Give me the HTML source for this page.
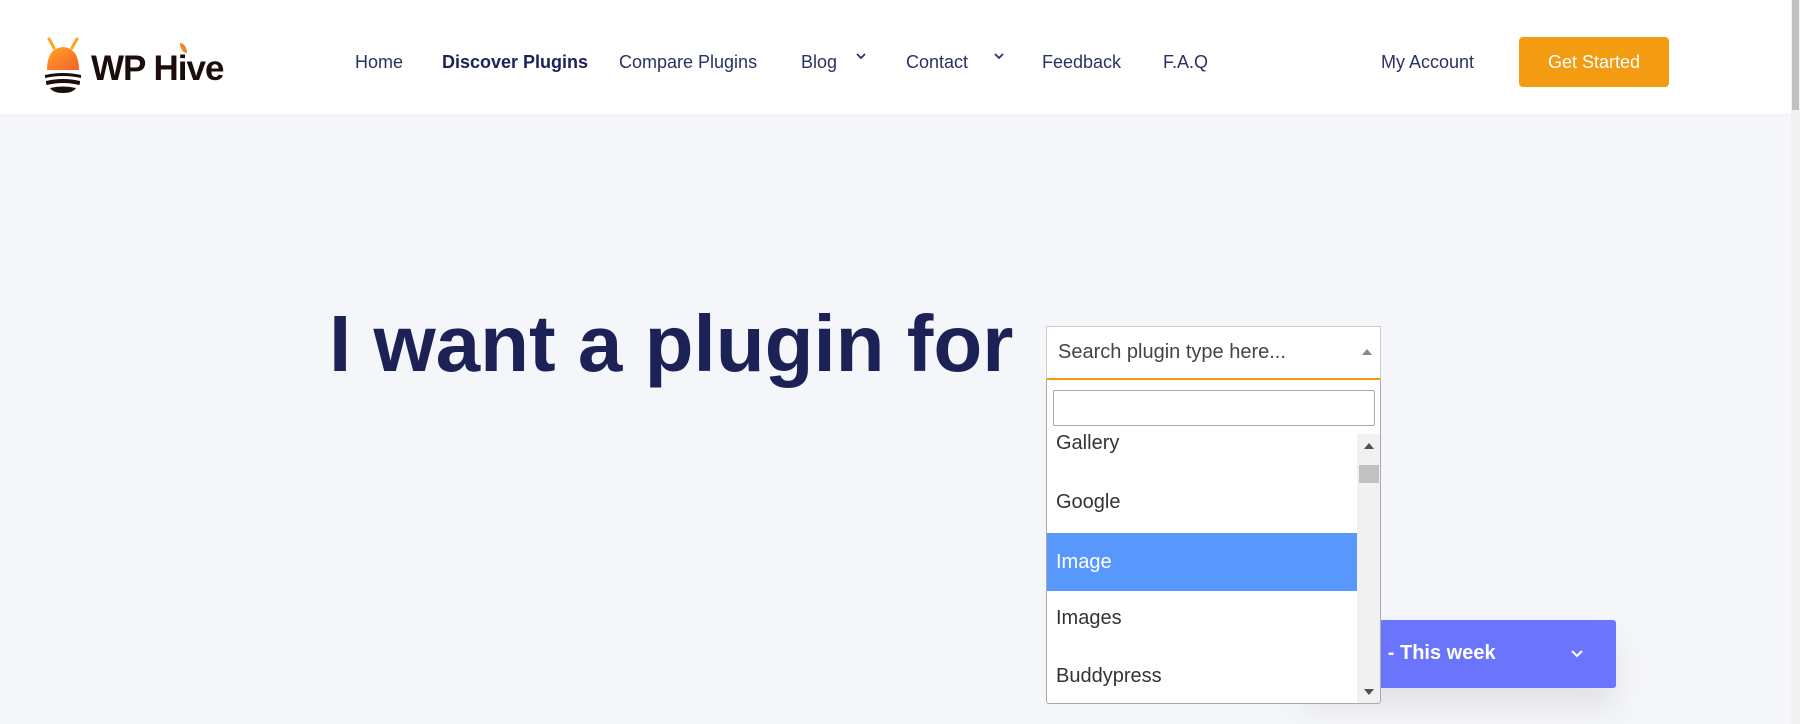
<!DOCTYPE html>
<html><head><style>
*{margin:0;padding:0;box-sizing:border-box}
body{width:1800px;height:724px;background:#f5f6fa;font-family:"Liberation Sans",sans-serif;position:relative;overflow:hidden}
header{position:absolute;left:0;top:0;width:1791px;height:115px;background:#fff;border-bottom:1px solid #eceef3}
.nav{position:absolute;top:52px;font-size:18px;color:#2b3163;white-space:nowrap}
.chev{position:absolute;top:51px;width:10px;height:10px}
.btn{position:absolute;left:1519px;top:37px;width:150px;height:50px;background:#f39c12;color:#fff;font-size:18px;border-radius:4px;text-align:center;line-height:50px}
.sb{position:absolute;right:0;top:0;width:9px;height:724px;background:#f1f1f1}
.sb:after{content:"";position:absolute;left:1px;top:0;width:7px;height:110px;background:#c1c1c1}
h1{position:absolute;left:329px;top:298px;font-size:80px;font-weight:bold;color:#1c2156;white-space:nowrap}
.sel{position:absolute;left:1046px;top:326px;width:335px;height:55px;background:#fff;border:1px solid #ccc;border-bottom:3px solid #f39c12}
.sel span{position:absolute;left:11px;top:14px;font-size:20px;color:#444}
.dd{position:absolute;left:1046px;top:380px;width:335px;height:324px;background:#fff;border:1px solid #aaa;border-top:none;border-radius:0 0 3px 3px;overflow:hidden}
.inp{position:absolute;left:6px;top:10px;width:322px;height:36px;border:1px solid #aaa;border-radius:2px}
.opt{position:absolute;left:0;width:310px;height:58px;font-size:20px;color:#333;padding-left:9px;line-height:58px}
.scr{position:absolute;left:310px;top:54px;width:24px;height:270px;background:#f1f1f1}
.purple{position:absolute;left:1300px;top:620px;width:316px;height:68px;background:#6b74fc;border-radius:3px;box-shadow:0 20px 30px rgba(0,0,0,.08)}
</style></head><body>
<header>
<svg style="position:absolute;left:42px;top:36px" width="42" height="58" viewBox="0 0 42 58">
<defs><linearGradient id="g" x1="0" y1="0" x2="1" y2="1"><stop offset="0" stop-color="#ffa41f"/><stop offset="1" stop-color="#f5612f"/></linearGradient></defs>
<path d="M12 12 Q9 6 7 3" stroke="#ffa41f" stroke-width="3" fill="none" stroke-linecap="round"/>
<path d="M30 12 Q33 6 35 3" stroke="#ffa41f" stroke-width="3" fill="none" stroke-linecap="round"/>
<path d="M5 34 Q5 12 21 11 Q37 12 37 34 Z" fill="url(#g)"/>
<path d="M3 39 Q21 35 39 39 L39 42 Q21 38 3 42Z" fill="#1c0d0d"/>
<path d="M4 45 Q21 41 38 45 Q38 49 37 49 Q21 45 5 49 Q4 49 4 45Z" fill="#1c0d0d"/>
<path d="M8 52 Q21 49 34 52 Q31 57 21 57 Q11 57 8 52Z" fill="#1c0d0d"/>
</svg>
<div style="position:absolute;left:91px;top:49px;font-size:35px;font-weight:bold;color:#1c0d0d;letter-spacing:-1px">WP Hi<span style="position:relative">v<span style="position:absolute;left:-6px;top:-6px;width:7px;height:10px;background:#f5842a;border-radius:0 100% 0 100%"></span></span>e</div>
<div class="nav" style="left:355px">Home</div>
<div class="nav" style="left:442px;font-weight:bold;color:#1c2156">Discover Plugins</div>
<div class="nav" style="left:619px">Compare Plugins</div>
<div class="nav" style="left:801px">Blog</div>
<svg class="chev" style="left:856px" viewBox="0 0 10 10"><path d="M1 3l4 4 4-4" stroke="#2b3163" stroke-width="1.8" fill="none"/></svg>
<div class="nav" style="left:906px">Contact</div>
<svg class="chev" style="left:994px" viewBox="0 0 10 10"><path d="M1 3l4 4 4-4" stroke="#2b3163" stroke-width="1.8" fill="none"/></svg>
<div class="nav" style="left:1042px">Feedback</div>
<div class="nav" style="left:1163px">F.A.Q</div>
<div class="nav" style="left:1381px">My Account</div>
<div class="btn">Get Started</div>
</header>
<div class="sb"></div>
<h1>I want a plugin for</h1>
<div class="purple">
<div style="position:absolute;left:70px;top:22px;color:#fff;font-size:20px;font-weight:bold">d - This week</div>
<svg style="position:absolute;left:270px;top:28px" width="14" height="12" viewBox="0 0 14 12"><path d="M2 3l5 5 5-5" stroke="#fff" stroke-width="2" fill="none"/></svg>
</div>
<div class="sel"><span>Search plugin type here...</span>
<svg style="position:absolute;left:315px;top:21px" width="10" height="8"><path d="M0 7L5 1L10 7Z" fill="#888"/></svg></div>
<div class="dd">
<div class="inp"></div>
<div class="opt" style="top:34px">Gallery</div>
<div class="opt" style="top:93px">Google</div>
<div class="opt" style="top:153px;background:#5897fb;color:#fff">Image</div>
<div class="opt" style="top:209px">Images</div>
<div class="opt" style="top:267px">Buddypress</div>
<div class="scr">
<svg style="position:absolute;left:7px;top:8px" width="10" height="8"><path d="M0 7L5 1L10 7Z" fill="#505050"/></svg>
<div style="position:absolute;left:2px;top:31px;width:20px;height:18px;background:#c1c1c1"></div>
<svg style="position:absolute;left:7px;top:254px" width="10" height="8"><path d="M0 1L5 7L10 1Z" fill="#505050"/></svg>
</div>
</div>
</body></html>
